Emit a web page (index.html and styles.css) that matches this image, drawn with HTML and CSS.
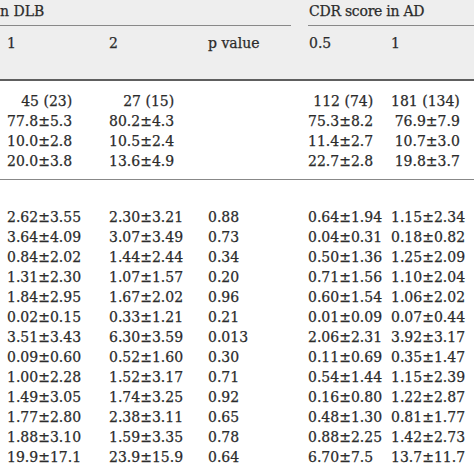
FILE: index.html
```html
<!DOCTYPE html>
<html>
<head>
<meta charset="utf-8">
<link rel="stylesheet" href="styles.css">
</head>
<body>
<div class="table">
  <div class="head">
    <div class="groups">
      <div class="group g1">n DLB</div>
      <div class="group g2">CDR score in AD</div>
    </div>
    <div class="cols">
      <div>1</div><div>2</div><div>p value</div><div class="sh">0.5</div><div>1</div>
    </div>
  </div>
  <div class="demo">
    <div class="dcol c1"><div class="stack"><div>45 (23)</div><div>77.8±5.3</div><div>10.0±2.8</div><div>20.0±3.8</div></div></div>
    <div class="dcol c2"><div class="stack"><div>27 (15)</div><div>80.2±4.3</div><div>10.5±2.4</div><div>13.6±4.9</div></div></div>
    <div class="dcol c3"></div>
    <div class="dcol c4"><div class="stack"><div>112 (74)</div><div>75.3±8.2</div><div>11.4±2.7</div><div>22.7±2.8</div></div></div>
    <div class="dcol c5"><div class="stack"><div>181 (134)</div><div>76.9±7.9</div><div>10.7±3.0</div><div>19.8±3.7</div></div></div>
  </div>
  <div class="scores">
    <div>2.62±3.55</div><div>2.30±3.21</div><div>0.88</div><div>0.64±1.94</div><div>1.15±2.34</div>
    <div>3.64±4.09</div><div>3.07±3.49</div><div>0.73</div><div>0.04±0.31</div><div>0.18±0.82</div>
    <div>0.84±2.02</div><div>1.44±2.44</div><div>0.34</div><div>0.50±1.36</div><div>1.25±2.09</div>
    <div>1.31±2.30</div><div>1.07±1.57</div><div>0.20</div><div>0.71±1.56</div><div>1.10±2.04</div>
    <div>1.84±2.95</div><div>1.67±2.02</div><div>0.96</div><div>0.60±1.54</div><div>1.06±2.02</div>
    <div>0.02±0.15</div><div>0.33±1.21</div><div>0.21</div><div>0.01±0.09</div><div>0.07±0.44</div>
    <div>3.51±3.43</div><div>6.30±3.59</div><div>0.013</div><div>2.06±2.31</div><div>3.92±3.17</div>
    <div>0.09±0.60</div><div>0.52±1.60</div><div>0.30</div><div>0.11±0.69</div><div>0.35±1.47</div>
    <div>1.00±2.28</div><div>1.52±3.17</div><div>0.71</div><div>0.54±1.44</div><div>1.15±2.39</div>
    <div>1.49±3.05</div><div>1.74±3.25</div><div>0.92</div><div>0.16±0.80</div><div>1.22±2.87</div>
    <div>1.77±2.80</div><div>2.38±3.11</div><div>0.65</div><div>0.48±1.30</div><div>0.81±1.77</div>
    <div>1.88±3.10</div><div>1.59±3.35</div><div>0.78</div><div>0.88±2.25</div><div>1.42±2.73</div>
    <div>19.9±17.1</div><div>23.9±15.9</div><div>0.64</div><div>6.70±7.5</div><div>13.7±11.7</div>
  </div>
</div>
</body>
</html>
```
FILE: styles.css
```css
html, body {
  margin: 0;
  padding: 0;
  background: #ffffff;
}
body {
  width: 474px;
  height: 474px;
  overflow: hidden;
  font-family: "DejaVu Serif", serif;
  font-size: 14px;
  line-height: 20px;
  color: #2b2b2b;
  -webkit-text-stroke: 0.25px #2b2b2b;
}
.table {
  width: 474px;
}
.head {
  background: #eeeeee;
  padding-top: 1px;
  border-bottom: 2px solid #5e5e5e;
}
.groups {
  display: flex;
}
.group {
  padding-bottom: 4px;
  border-bottom: 1px solid #888888;
  white-space: nowrap;
}
.g1 {
  width: 291px;
}
.g2 {
  margin-left: 17px;
  padding-left: 1px;
  flex: 1;
  letter-spacing: -0.25px;
}
.cols {
  display: grid;
  grid-template-columns: 102px 99px 100px 83px 1fr;
  padding: 7px 0 26px 7px;
}
.sh {
  padding-left: 1px;
}
.demo {
  display: flex;
  padding: 10px 0 8px 7px;
  border-bottom: 1px solid #888888;
}
.dcol {
  flex: none;
}
.c1 { width: 102px; }
.c2 { width: 99px; }
.c3 { width: 100px; }
.c4 { width: 83px; }
.c5 { flex: 1; }
.stack {
  width: fit-content;
  text-align: right;
  white-space: nowrap;
}
.scores {
  display: grid;
  grid-template-columns: 102px 99px 100px 83px 1fr;
  padding: 27px 0 0 7px;
  white-space: nowrap;
}
```
